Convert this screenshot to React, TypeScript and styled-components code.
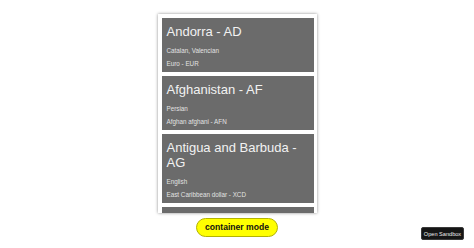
import React from "react";
import styled, { createGlobalStyle } from "styled-components";

const GlobalStyle = createGlobalStyle`
  html, body {
    margin: 0;
    padding: 0;
    background: #ffffff;
    font-family: "Liberation Sans", Arial, Helvetica, sans-serif;
  }
`;

const Page = styled.div`
  display: flex;
  flex-direction: column;
  align-items: center;
  padding-top: 14px;
  height: 248px;
  box-sizing: border-box;
`;

const List = styled.div`
  width: 159px;
  height: 199px;
  box-sizing: border-box;
  padding: 4px 3px 0 4px;
  background: #ffffff;
  box-shadow: 0 0 3px rgba(0, 0, 0, 0.45);
  overflow: hidden;
  display: flex;
  flex-direction: column;
  gap: 4px;
`;

const Card = styled.div`
  flex-shrink: 0;
  background: #6b6b6b;
  padding: 6px 5px 4px;
  color: #f2f2f2;
`;

const Title = styled.h2`
  margin: 0 0 8px;
  font-size: 13px;
  font-weight: normal;
  line-height: 15px;
`;

const Info = styled.p`
  margin: 0;
  font-size: 6.3px;
  line-height: 8px;
  color: #e2e2e2;

  & + & {
    margin-top: 5px;
  }
`;

const ModeButton = styled.button`
  margin-top: 5px;
  display: inline-flex;
  align-items: center;
  justify-content: center;
  height: 19px;
  padding: 0 8px;
  border-radius: 10px;
  border: 1px solid #b3b300;
  background: #ffff00;
  color: #111111;
  font-family: "Liberation Sans", Arial, sans-serif;
  font-weight: bold;
  font-size: 8.6px;
  line-height: 11px;
  white-space: nowrap;
  cursor: pointer;
`;

const SandboxLink = styled.div`
  position: fixed;
  right: 10px;
  bottom: 8px;
  width: 43px;
  height: 13px;
  box-sizing: border-box;
  display: flex;
  align-items: center;
  justify-content: center;
  background: #151515;
  border: 1px solid #3a3a3a;
  border-radius: 2px;
  color: #eeeeee;
  font-size: 5.6px;
  white-space: nowrap;
`;

const countries = [
  { name: "Andorra", code: "AD", languages: "Catalan, Valencian", currency: "Euro - EUR" },
  { name: "Afghanistan", code: "AF", languages: "Persian", currency: "Afghan afghani - AFN" },
  {
    name: "Antigua and Barbuda",
    code: "AG",
    languages: "English",
    currency: "East Caribbean dollar - XCD",
  },
  { name: "Anguilla", code: "AI", languages: "English", currency: "East Caribbean dollar - XCD" },
];

export default function App() {
  return (
    <>
      <GlobalStyle />
      <Page>
        <List>
          {countries.map((c) => (
            <Card key={c.code}>
              <Title>
                {c.name} - {c.code}
              </Title>
              <Info>{c.languages}</Info>
              <Info>{c.currency}</Info>
            </Card>
          ))}
        </List>
        <ModeButton>container mode</ModeButton>
      </Page>
      <SandboxLink>Open Sandbox</SandboxLink>
    </>
  );
}
